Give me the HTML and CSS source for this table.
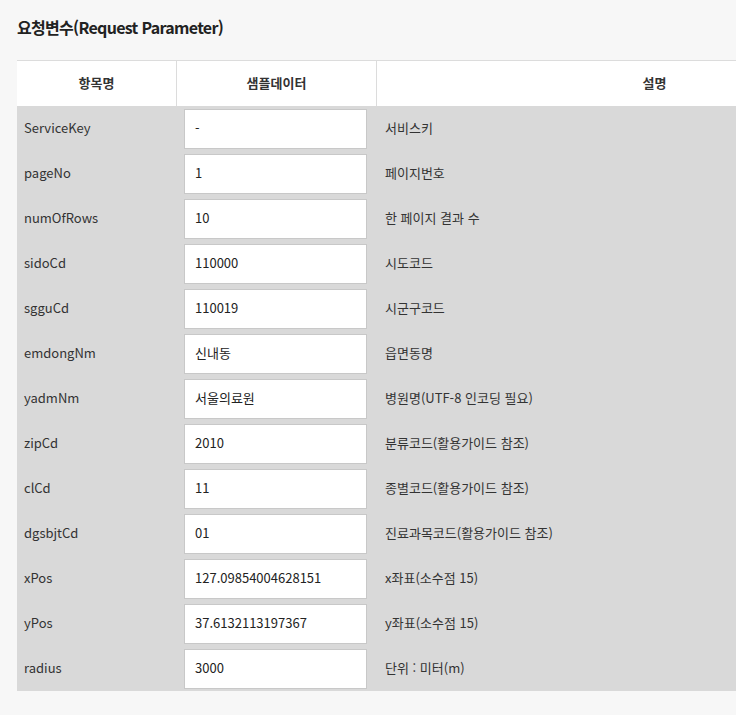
FILE: index.html
```html
<!DOCTYPE html>
<html lang="ko">
<head>
<meta charset="utf-8">
<link rel="stylesheet" href="styles.css">
</head>
<body>
<div class="page">
  <h3 class="title">요청변수(Request Parameter)</h3>
  <div class="table-wrap">
    <div class="table">
      <div class="row head">
        <div class="c1">항목명</div>
        <div class="c2">샘플데이터</div>
        <div class="c3">설명</div>
      </div>
      <div class="row"><div class="c1">ServiceKey</div><div class="c2"><div class="inp">-</div></div><div class="c3">서비스키</div></div>
      <div class="row"><div class="c1">pageNo</div><div class="c2"><div class="inp">1</div></div><div class="c3">페이지번호</div></div>
      <div class="row"><div class="c1">numOfRows</div><div class="c2"><div class="inp">10</div></div><div class="c3">한 페이지 결과 수</div></div>
      <div class="row"><div class="c1">sidoCd</div><div class="c2"><div class="inp">110000</div></div><div class="c3">시도코드</div></div>
      <div class="row"><div class="c1">sgguCd</div><div class="c2"><div class="inp">110019</div></div><div class="c3">시군구코드</div></div>
      <div class="row"><div class="c1">emdongNm</div><div class="c2"><div class="inp">신내동</div></div><div class="c3">읍면동명</div></div>
      <div class="row"><div class="c1">yadmNm</div><div class="c2"><div class="inp">서울의료원</div></div><div class="c3">병원명(UTF-8 인코딩 필요)</div></div>
      <div class="row"><div class="c1">zipCd</div><div class="c2"><div class="inp">2010</div></div><div class="c3">분류코드(활용가이드 참조)</div></div>
      <div class="row"><div class="c1">clCd</div><div class="c2"><div class="inp">11</div></div><div class="c3">종별코드(활용가이드 참조)</div></div>
      <div class="row"><div class="c1">dgsbjtCd</div><div class="c2"><div class="inp">01</div></div><div class="c3">진료과목코드(활용가이드 참조)</div></div>
      <div class="row"><div class="c1">xPos</div><div class="c2"><div class="inp">127.09854004628151</div></div><div class="c3">x좌표(소수점 15)</div></div>
      <div class="row"><div class="c1">yPos</div><div class="c2"><div class="inp">37.6132113197367</div></div><div class="c3">y좌표(소수점 15)</div></div>
      <div class="row"><div class="c1">radius</div><div class="c2"><div class="inp">3000</div></div><div class="c3">단위 : 미터(m)</div></div>
    </div>
  </div>
</div>
</body>
</html>
```
FILE: styles.css
```css
html, body {
  margin: 0;
  padding: 0;
  background: #f7f7f7;
  overflow: hidden;
}
body {
  font-family: "Noto Sans CJK KR", "Noto Sans", sans-serif;
  color: #333;
  font-size: 13px;
}
.page {
  padding: 16px 0 0 17px;
}
.title {
  margin: 0;
  font-size: 16px;
  font-weight: bold;
  color: #222;
  line-height: 22px;
  letter-spacing: -0.7px;
}
.table-wrap {
  margin-top: 22px;
  overflow: hidden;
}
.table {
  width: 919px;
  border-top: 1px solid #dcdcdc;
}
.row {
  display: grid;
  grid-template-columns: 159px 200px 556px;
  height: 45px;
  background: #d9d9d9;
}
.row > div {
  display: flex;
  align-items: center;
}
.row .c1 { padding: 0 0 3px 7px; }
.row .c2 { padding: 0 9px 0 8px; }
.row .c3 { padding: 0 0 3px 9px; }
.row.head {
  background: #fff;
  font-weight: bold;
  color: #333;
}
.row.head > div {
  justify-content: center;
  padding: 0 0 3px 0;
}
.row.head .c2, .row.head .c3 {
  border-left: 1px solid #dcdcdc;
}
.inp {
  flex: 1;
  height: 38px;
  background: #fff;
  border: 1px solid #c8c8c8;
  display: flex;
  align-items: center;
  padding: 0 0 3px 10px;
  box-sizing: border-box;
  height: 40px;
  color: #222;
}
```
